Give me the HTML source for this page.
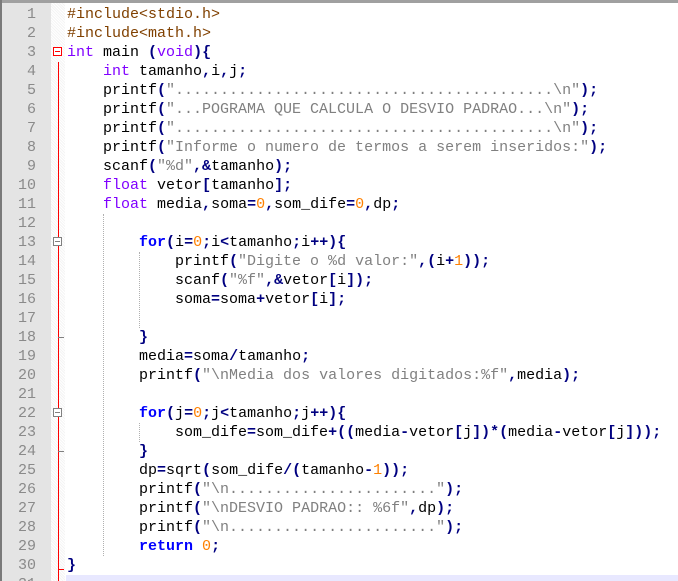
<!DOCTYPE html>
<html><head><meta charset="utf-8"><style>
html,body{margin:0;padding:0;width:678px;height:581px;overflow:hidden;background:#fff}
body{position:relative;font-family:"Liberation Mono",monospace;font-size:15px}
#top{position:absolute;left:0;top:0;width:678px;height:3px;background:#a0a0a0}
#lb{position:absolute;left:0;top:0;width:2px;height:581px;background:#7a7a7a}
#gut{position:absolute;left:2px;top:3px;width:49px;height:578px;background:#e4e4e4}
#fold{position:absolute;left:51px;top:3px;width:14px;height:578px;background:repeating-linear-gradient(45deg,#f4f4f4 0 1px,#fff 1px 2px)}
#redl{position:absolute;left:58px;top:62px;width:1px;height:519px;background:#f00}
.fb{position:absolute;left:53px;width:9px;height:9px;border:1px solid #f00;background:#fff;box-sizing:border-box}
.fb:after{content:"";position:absolute;left:1px;top:3px;width:5px;height:1px;background:#f00}
.fb.g{border-color:#808080}.fb.g:after{background:#808080}
.tick{position:absolute;left:58px;width:6px;height:1px;background:#808080}
.ln{position:absolute;left:2px;width:34px;text-align:right;color:#8a8a8a;height:19px;line-height:19px}
.cl{position:absolute;left:67px;height:19px;line-height:19px;white-space:pre;color:#000}
.g1{position:absolute;width:0;border-left:1px dotted #b0b0b0}
#cur{position:absolute;left:66px;top:575px;width:612px;height:6px;background:#e8e8ff}
.p{color:#804000}.k{color:#8000ff}.b{color:#0000ff;font-weight:bold}.o{color:#000080;font-weight:bold}.s{color:#808080}.n{color:#ff8000}
</style></head><body>
<div id="top"></div><div id="lb"></div><div id="gut"></div><div id="fold"></div><div id="cur"></div>
<div id="redl"></div>
<div class="fb" style="top:47px"></div>
<div class="fb g" style="top:237px"></div>
<div class="fb g" style="top:408px"></div>
<div class="tick" style="top:337px"></div>
<div class="tick" style="top:451px"></div>
<div class="tick" style="top:569px;background:#f00"></div>
<div class="g1" style="left:103px;top:214px;height:342px"></div>
<div class="g1" style="left:139px;top:252px;height:76px"></div>
<div class="g1" style="left:139px;top:423px;height:19px"></div>

<div class="ln" style="top:5px">1</div><div class="ln" style="top:24px">2</div><div class="ln" style="top:43px">3</div><div class="ln" style="top:62px">4</div><div class="ln" style="top:81px">5</div><div class="ln" style="top:100px">6</div><div class="ln" style="top:119px">7</div><div class="ln" style="top:138px">8</div><div class="ln" style="top:157px">9</div><div class="ln" style="top:176px">10</div><div class="ln" style="top:195px">11</div><div class="ln" style="top:214px">12</div><div class="ln" style="top:233px">13</div><div class="ln" style="top:252px">14</div><div class="ln" style="top:271px">15</div><div class="ln" style="top:290px">16</div><div class="ln" style="top:309px">17</div><div class="ln" style="top:328px">18</div><div class="ln" style="top:347px">19</div><div class="ln" style="top:366px">20</div><div class="ln" style="top:385px">21</div><div class="ln" style="top:404px">22</div><div class="ln" style="top:423px">23</div><div class="ln" style="top:442px">24</div><div class="ln" style="top:461px">25</div><div class="ln" style="top:480px">26</div><div class="ln" style="top:499px">27</div><div class="ln" style="top:518px">28</div><div class="ln" style="top:537px">29</div><div class="ln" style="top:556px">30</div><div class="ln" style="top:575px">31</div>

<div class="cl" style="top:5px"><span class="p">#include&lt;stdio.h&gt;</span></div>
<div class="cl" style="top:24px"><span class="p">#include&lt;math.h&gt;</span></div>
<div class="cl" style="top:43px"><span class="k">int</span> main <span class="o">(</span><span class="k">void</span><span class="o">){</span></div>
<div class="cl" style="top:62px">    <span class="k">int</span> tamanho<span class="o">,</span>i<span class="o">,</span>j<span class="o">;</span></div>
<div class="cl" style="top:81px">    printf<span class="o">(</span><span class="s">"..........................................\n"</span><span class="o">);</span></div>
<div class="cl" style="top:100px">    printf<span class="o">(</span><span class="s">"...POGRAMA QUE CALCULA O DESVIO PADRAO...\n"</span><span class="o">);</span></div>
<div class="cl" style="top:119px">    printf<span class="o">(</span><span class="s">"..........................................\n"</span><span class="o">);</span></div>
<div class="cl" style="top:138px">    printf<span class="o">(</span><span class="s">"Informe o numero de termos a serem inseridos:"</span><span class="o">);</span></div>
<div class="cl" style="top:157px">    scanf<span class="o">(</span><span class="s">"%d"</span><span class="o">,&amp;</span>tamanho<span class="o">);</span></div>
<div class="cl" style="top:176px">    <span class="k">float</span> vetor<span class="o">[</span>tamanho<span class="o">];</span></div>
<div class="cl" style="top:195px">    <span class="k">float</span> media<span class="o">,</span>soma<span class="o">=</span><span class="n">0</span><span class="o">,</span>som_dife<span class="o">=</span><span class="n">0</span><span class="o">,</span>dp<span class="o">;</span></div>
<div class="cl" style="top:233px">        <span class="b">for</span><span class="o">(</span>i<span class="o">=</span><span class="n">0</span><span class="o">;</span>i<span class="o">&lt;</span>tamanho<span class="o">;</span>i<span class="o">++){</span></div>
<div class="cl" style="top:252px">            printf<span class="o">(</span><span class="s">"Digite o %d valor:"</span><span class="o">,(</span>i<span class="o">+</span><span class="n">1</span><span class="o">));</span></div>
<div class="cl" style="top:271px">            scanf<span class="o">(</span><span class="s">"%f"</span><span class="o">,&amp;</span>vetor<span class="o">[</span>i<span class="o">]);</span></div>
<div class="cl" style="top:290px">            soma<span class="o">=</span>soma<span class="o">+</span>vetor<span class="o">[</span>i<span class="o">];</span></div>
<div class="cl" style="top:328px">        <span class="o">}</span></div>
<div class="cl" style="top:347px">        media<span class="o">=</span>soma<span class="o">/</span>tamanho<span class="o">;</span></div>
<div class="cl" style="top:366px">        printf<span class="o">(</span><span class="s">"\nMedia dos valores digitados:%f"</span><span class="o">,</span>media<span class="o">);</span></div>
<div class="cl" style="top:404px">        <span class="b">for</span><span class="o">(</span>j<span class="o">=</span><span class="n">0</span><span class="o">;</span>j<span class="o">&lt;</span>tamanho<span class="o">;</span>j<span class="o">++){</span></div>
<div class="cl" style="top:423px">            som_dife<span class="o">=</span>som_dife<span class="o">+((</span>media<span class="o">-</span>vetor<span class="o">[</span>j<span class="o">])*(</span>media<span class="o">-</span>vetor<span class="o">[</span>j<span class="o">]));</span></div>
<div class="cl" style="top:442px">        <span class="o">}</span></div>
<div class="cl" style="top:461px">        dp<span class="o">=</span>sqrt<span class="o">(</span>som_dife<span class="o">/(</span>tamanho<span class="o">-</span><span class="n">1</span><span class="o">));</span></div>
<div class="cl" style="top:480px">        printf<span class="o">(</span><span class="s">"\n......................."</span><span class="o">);</span></div>
<div class="cl" style="top:499px">        printf<span class="o">(</span><span class="s">"\nDESVIO PADRAO:: %6f"</span><span class="o">,</span>dp<span class="o">);</span></div>
<div class="cl" style="top:518px">        printf<span class="o">(</span><span class="s">"\n......................."</span><span class="o">);</span></div>
<div class="cl" style="top:537px">        <span class="b">return</span> <span class="n">0</span><span class="o">;</span></div>
<div class="cl" style="top:556px"><span class="o">}</span></div>
</body></html>
